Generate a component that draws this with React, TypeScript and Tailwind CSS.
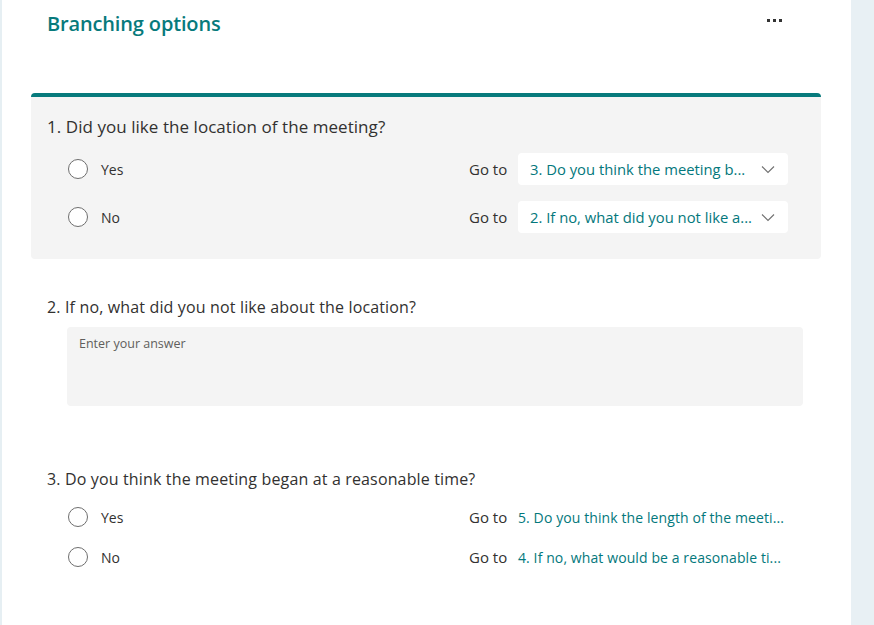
import React from "react";

const font = { fontFamily: '"Segoe UI", "Open Sans", "Noto Sans", sans-serif' };

function Radio() {
  return <span className="block w-[20px] h-[20px] rounded-full border border-[#6e6e6e] bg-white shrink-0" />;
}

function Chevron() {
  return (
    <svg width="16" height="16" viewBox="0 0 16 16" fill="none" className="shrink-0">
      <path d="M2 5.5 L8 11.5 L14 5.5" stroke="#707070" strokeWidth="1.1" />
    </svg>
  );
}

function DropRow({ label, target }: { label: string; target: string }) {
  return (
    <div className="flex items-center h-[32px]">
      <div className="flex items-center w-[438px]">
        <div className="w-[37px]" />
        <Radio />
        <span className="ml-[13px] text-[14px] text-[#323130]">{label}</span>
      </div>
      <span className="text-[15px] text-[#323130] w-[49px]">Go to</span>
      <div className="w-[270px] h-[32px] bg-white rounded-[4px] flex items-center pl-[12px] pr-[12px] justify-between">
        <span className="text-[14.8px] text-[#03787c] whitespace-nowrap">{target}</span>
        <Chevron />
      </div>
    </div>
  );
}

function PlainRow({ label, target }: { label: string; target: string }) {
  return (
    <div className="flex items-center h-[24px]">
      <div className="flex items-center w-[438px]">
        <div className="w-[37px]" />
        <Radio />
        <span className="ml-[13px] text-[14px] text-[#323130]">{label}</span>
      </div>
      <span className="text-[15px] text-[#323130] w-[49px]">Go to</span>
      <span className="text-[14px] tracking-[0.1px] text-[#03787c] whitespace-nowrap">{target}</span>
    </div>
  );
}

export default function App() {
  return (
    <div className="flex w-[874px] h-[625px] bg-white overflow-hidden" style={font}>
      <div className="w-[2px] bg-[#e6eff3]" />
      <div className="flex-1 pl-[29px] flex flex-col">
        <div className="w-[790px] flex items-start justify-between pt-[10px] h-[93px]">
          <h1 className="pl-[16px] text-[20px] tracking-[-0.15px] font-semibold text-[#077a7c] leading-[28px]">Branching options</h1>
          <div className="flex gap-[3px] mt-[9px] mr-[39px]">
            <span className="w-[3px] h-[3px] bg-[#333]" />
            <span className="w-[3px] h-[3px] bg-[#333]" />
            <span className="w-[3px] h-[3px] bg-[#333]" />
          </div>
        </div>

        <div className="w-[790px] bg-[#f4f4f4] border-t-[4px] border-[#077a7c] rounded-[4px] pt-[18px] pb-[26px] pl-[16px]">
          <div className="text-[17px] tracking-[0.05px] leading-[24px] text-[#323130]">1. Did you like the location of the meeting?</div>
          <div className="flex flex-col gap-[16px] mt-[14px] -ml-[16px]">
            <DropRow label="Yes" target="3. Do you think the meeting b..." />
            <DropRow label="No" target="2. If no, what did you not like a..." />
          </div>
        </div>

        <div className="w-[790px] pl-[16px] pt-[36px]">
          <div className="text-[16px] tracking-[0.15px] leading-[24px] text-[#323130]">2. If no, what did you not like about the location?</div>
          <div className="ml-[20px] mt-[8px] w-[736px] h-[79px] bg-[#f4f4f4] rounded-[4px] px-[12px] pt-[6px] leading-[18px]">
            <span className="text-[12.5px] text-[#605e5c]">Enter your answer</span>
          </div>
        </div>

        <div className="w-[790px] pl-[16px] pt-[61px]">
          <div className="text-[16px] tracking-[0.15px] leading-[24px] text-[#323130]">3. Do you think the meeting began at a reasonable time?</div>
          <div className="flex flex-col gap-[16px] mt-[14px] -ml-[16px]">
            <PlainRow label="Yes" target="5. Do you think the length of the meeti..." />
            <PlainRow label="No" target="4. If no, what would be a reasonable ti..." />
          </div>
        </div>
      </div>
      <div className="w-[23px] bg-[#e8f0f4]" />
    </div>
  );
}
